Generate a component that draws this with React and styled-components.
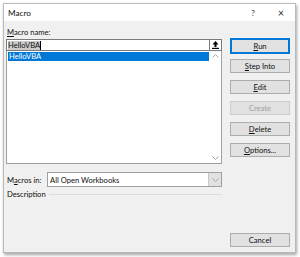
import styled, { createGlobalStyle } from "styled-components";

const Global = createGlobalStyle`
body {
  margin: 0;
  background: #ffffff;
  font-family: Lato, "Noto Sans", sans-serif;
  font-size: 7.6px;
  color: #111;
}
`

const Page = styled.div`
width: 300px;
height: 257px;
padding: 3px 0 0 3px;
box-sizing: border-box;
`

const Dialog = styled.div`
width: 293px;
height: 250px;
display: flex;
flex-direction: column;
border: 1px solid #b9b9b9;
box-sizing: border-box;
box-shadow: 1px 2px 3px rgba(0,0,0,0.35);
background: #f0f0f0;
`

const TitleBar = styled.div`
height: 17px;
background: #ffffff;
display: flex;
align-items: center;
padding: 0 0 0 4px;
font-size: 8.2px;
`

const Title = styled.div`
flex: 1;
`

const TitleBtn = styled.div`
width: 28px;
text-align: center;
color: #333;
font-size: ${p => p.$size || 8}px;
`

const Body = styled.div`
flex: 1;
display: flex;
padding: 5px 5px 5px 2px;
gap: 8px;
`

const Left = styled.div`
width: 216px;
display: flex;
flex-direction: column;
`

const Label = styled.div`
height: 12px;
line-height: 12px;
padding-left: 1px;
margin-bottom: 1px;
`

const U = styled.span`
text-decoration: underline;
`

const InputRow = styled.div`
display: flex;
height: 12px;
`

const Input = styled.div`
flex: 1;
border: 1px solid #7a7a7a;
border-right: none;
background: #fff;
display: flex;
align-items: center;
padding-left: 1px;
`

const Sel = styled.span`
background: #cccccc;
line-height: 9px;
`

const Caret = styled.span`
display: inline-block;
width: 1px;
height: 9px;
background: #000;
`

const CollapseBtn = styled.div`
width: 11px;
border: 1px solid #7a7a7a;
background: #fff;
display: flex;
align-items: center;
justify-content: center;
`

const ListBox = styled.div`
height: 113px;
border: 1px solid #a0a0a0;
border-top: none;
background: #fff;
display: flex;
box-sizing: border-box;
`

const ListItems = styled.div`
flex: 1;
padding: 1px 0 0 1px;
`

const Item = styled.div`
height: 9px;
line-height: 9px;
padding-left: 1px;
background: ${p => (p.$selected ? "#0078d7" : "transparent")};
color: ${p => (p.$selected ? "#fff" : "#111")};
`

const ScrollBar = styled.div`
width: 12px;
background: #ffffff;
display: flex;
flex-direction: column;
justify-content: space-between;
align-items: center;
padding: 3px 0;
`

const ComboRow = styled.div`
margin-top: 8px;
display: flex;
align-items: center;
height: 15px;
`

const ComboLabel = styled.div`
width: 40px;
padding-left: 1px;
`

const Combo = styled.div`
flex: 1;
height: 15px;
box-sizing: border-box;
border: 1px solid #a0a0a0;
background: #fff;
display: flex;
align-items: center;
padding-left: 2px;
`

const ComboText = styled.div`
flex: 1;
`

const ComboArrow = styled.div`
width: 12px;
height: 13px;
background: #e1e1e1;
border-left: 1px solid #c8c8c8;
display: flex;
align-items: center;
justify-content: center;
`

const DescRow = styled.div`
margin-top: 1px;
display: flex;
align-items: center;
height: 12px;
gap: 3px;
padding-left: 1px;
`

const Rule = styled.div`
flex: 1;
height: 1px;
background: #dcdcdc;
`

const Right = styled.div`
width: 60px;
display: flex;
flex-direction: column;
padding-top: 12px;
`

const Button = styled.div`
height: ${p => (p.$default ? 16 : 14)}px;
margin-bottom: ${p => (p.$last ? 0 : p.$default ? 5 : 7)}px;
box-sizing: border-box;
border: ${p => (p.$default ? 2 : 1)}px solid;
background: #e1e1e1;
color: ${p => (p.$disabled ? "#a0a0a0" : "#111")};
border-color: ${p => (p.$disabled ? "#cccccc" : p.$default ? "#0078d7" : "#adadad")};
display: flex;
align-items: center;
justify-content: center;
`

const Spacer = styled.div`
flex: 1;
`

const Chevron = ({ up }) => (
  <svg width="7" height="4" viewBox="0 0 7 4">
    <path d={up ? "M0.5 3.5 L3.5 0.5 L6.5 3.5" : "M0.5 0.5 L3.5 3.5 L6.5 0.5"} fill="none" stroke="#a6a6a6" strokeWidth="1" />
  </svg>
)

const CollapseIcon = () => (
  <svg width="7" height="8" viewBox="0 0 7 8">
    <path d="M3.5 0 L6.5 3.5 L4.5 3.5 L4.5 6 L2.5 6 L2.5 3.5 L0.5 3.5 Z" fill="#000" />
    <rect x="0" y="6.8" width="7" height="1.2" fill="#000" />
  </svg>
)

const buttons = [
  { label: "Run", u: "R", def: true },
  { label: "Step Into", u: "S" },
  { label: "Edit", u: "E" },
  { label: "Create", disabled: true },
  { label: "Delete", u: "D" },
  { label: "Options...", u: "O" },
]

function ButtonLabel({ label, u }) {
  if (!u) return label
  return (
    <>
      <U>{label[0]}</U>
      {label.slice(1)}
    </>
  )
}

function App() {
  return (
    <Page>
      <Global />
      <Dialog>
        <TitleBar>
          <Title>Macro</Title>
          <TitleBtn>?</TitleBtn>
          <TitleBtn $size={11}>×</TitleBtn>
        </TitleBar>
        <Body>
          <Left>
            <Label><U>M</U>acro name:</Label>
            <InputRow>
              <Input><Sel>HelloVBA</Sel><Caret /></Input>
              <CollapseBtn><CollapseIcon /></CollapseBtn>
            </InputRow>
            <ListBox>
              <ListItems>
                <Item $selected>HelloVBA</Item>
              </ListItems>
              <ScrollBar>
                <Chevron up />
                <Chevron />
              </ScrollBar>
            </ListBox>
            <ComboRow>
              <ComboLabel>M<U>a</U>cros in:</ComboLabel>
              <Combo>
                <ComboText>All Open Workbooks</ComboText>
                <ComboArrow><Chevron /></ComboArrow>
              </Combo>
            </ComboRow>
            <DescRow>
              Description
              <Rule />
            </DescRow>
          </Left>
          <Right>
            {buttons.map(b => (
              <Button key={b.label} $default={b.def} $disabled={b.disabled}>
                <ButtonLabel label={b.label} u={b.u} />
              </Button>
            ))}
            <Spacer />
            <Button $last>Cancel</Button>
          </Right>
        </Body>
      </Dialog>
    </Page>
  );
}

export default App;
